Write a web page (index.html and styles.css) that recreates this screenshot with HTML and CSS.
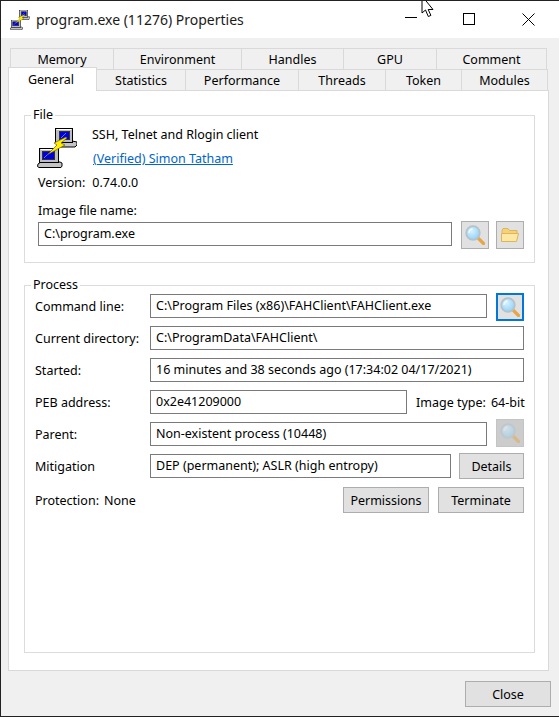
FILE: index.html
```html
<!DOCTYPE html>
<html lang="en">
<head>
<meta charset="utf-8">
<title>program.exe (11276) Properties</title>
<link rel="stylesheet" href="styles.css">
</head>
<body>
<svg width="0" height="0" class="defs">
  <defs>
    <radialGradient id="glass" cx=".4" cy=".35" r=".7">
      <stop offset="0" stop-color="#d8f2ff"/>
      <stop offset="1" stop-color="#8fd0f5"/>
    </radialGradient>
    <g id="putty">
      <path d="M22 13h13l5 1v3l-2 2H24z" fill="#c4c4c4" stroke="#000"/>
      <rect x="18.500" y=".5" width="17" height="14" fill="#bdbdbd" stroke="#000"/>
      <path d="M19.500 1.500h15" stroke="#fff"/>
      <rect x="22.500" y="3.500" width="10" height="8" fill="#0000e0" stroke="#333"/>
      <path d="M24 10l5-5" stroke="#4f7fff"/>
      <path d="M1 36l3-2h19l2 1v3l-1 1.500H2l-1.500-1z" fill="#c4c4c4" stroke="#000"/>
      <rect x="2.500" y="20.500" width="19" height="14" fill="#bdbdbd" stroke="#000"/>
      <path d="M3.500 21.500h17" stroke="#fff"/>
      <rect x="5.500" y="23.500" width="12" height="8" fill="#0000e0" stroke="#333"/>
      <path d="M7 30l5-5" stroke="#4f7fff"/>
      <path d="M29 9 17 15l3 2-10 10 18-10-4-2 6-5z" fill="#ffee00" stroke="#6b5c00" stroke-width=".7"/>
    </g>
    <g id="lens">
      <path d="M13.500 13.500 18.500 18.500" stroke="#e8a545" stroke-width="3.200" stroke-linecap="round"/>
      <circle cx="8" cy="8" r="6.800" fill="url(#glass)" stroke="#b4c2cc" stroke-width="1.700"/>
      <path d="M4 8a4.300 4.300 0 0 1 3.500-4" fill="none" stroke="#f2fbff" stroke-width="1.300"/>
    </g>
  </defs>
</svg>
<div class="window">
  <header class="titlebar">
    <svg class="appicon" viewBox="0 0 40 40" width="20" height="20"><use href="#putty"/></svg>
    <span class="wintitle">program.exe (11276) Properties</span>
    <div class="controls">
      <svg width="12" height="12" viewBox="0 0 12 12"><path d="M0 4.500h12" stroke="#000"/></svg>
      <svg width="12" height="12" viewBox="0 0 12 12"><rect x=".5" y=".5" width="11" height="11" fill="none" stroke="#000"/></svg>
      <svg class="closeicon" width="13" height="13" viewBox="0 0 13 13"><path d="M.5.500l12 12M12.500.500l-12 12" stroke="#000"/></svg>
    </div>
  </header>

  <main class="body">
    <nav class="tabs">
      <div class="tabrow back">
        <span class="tab">Memory</span>
        <span class="tab">Environment</span>
        <span class="tab">Handles</span>
        <span class="tab">GPU</span>
        <span class="tab">Comment</span>
      </div>
      <div class="tabrow front">
        <span class="tab active">General</span>
        <span class="tab">Statistics</span>
        <span class="tab">Performance</span>
        <span class="tab">Threads</span>
        <span class="tab">Token</span>
        <span class="tab">Modules</span>
      </div>
    </nav>

    <section class="panel">
      <fieldset class="group file">
        <legend>File</legend>
        <div class="fileinfo">
          <svg class="bigicon" viewBox="0 0 40 40" width="40" height="40"><use href="#putty"/></svg>
          <div class="filetext">
            <div>SSH, Telnet and Rlogin client</div>
            <a class="link" href="#">(Verified) Simon Tatham</a>
          </div>
        </div>
        <div class="version"><span>Version:</span><span>0.74.0.0</span></div>
        <div class="imagelabel">Image file name:</div>
        <div class="imagerow">
          <div class="field grow">C:\program.exe</div>
          <button class="iconbtn"><svg width="20" height="20" viewBox="0 0 20 20"><use href="#lens"/></svg></button>
          <button class="iconbtn">
            <svg width="20" height="18" viewBox="0 0 20 18"><path d="M2 4.500 3 2.500h5l1.500 2H17v3H2z" fill="#f4d27c" stroke="#e0b558"/><path d="M1.500 15.500V7.500h17l-2 8z" fill="#fde7a4" stroke="#e0b558"/></svg>
          </button>
        </div>
      </fieldset>

      <fieldset class="group process">
        <legend>Process</legend>
        <div class="row">
          <span class="label">Command line:</span>
          <div class="field grow">C:\Program Files (x86)\FAHClient\FAHClient.exe</div>
          <button class="iconbtn focus"><svg width="20" height="20" viewBox="0 0 20 20"><use href="#lens"/></svg></button>
        </div>
        <div class="row">
          <span class="label">Current directory:</span>
          <div class="field grow">C:\ProgramData\FAHClient\</div>
        </div>
        <div class="row">
          <span class="label">Started:</span>
          <div class="field grow">16 minutes and 38 seconds ago (17:34:02 04/17/2021)</div>
        </div>
        <div class="row">
          <span class="label">PEB address:</span>
          <div class="field grow">0x2e41209000</div>
          <span class="imagetype"><span>Image type:</span><span>64-bit</span></span>
        </div>
        <div class="row">
          <span class="label">Parent:</span>
          <div class="field grow">Non-existent process (10448)</div>
          <button class="iconbtn disabled"><svg width="20" height="20" viewBox="0 0 20 20"><use href="#lens"/></svg></button>
        </div>
        <div class="row">
          <span class="label">Mitigation</span>
          <div class="field grow">DEP (permanent); ASLR (high entropy)</div>
          <button class="btn details">Details</button>
        </div>
        <div class="row lastrow">
          <span class="protection"><span>Protection:</span><span>None</span></span>
          <button class="btn action">Permissions</button>
          <button class="btn action">Terminate</button>
        </div>
      </fieldset>
    </section>

    <footer class="footer"><button class="btn close">Close</button></footer>
  </main>

  <svg class="cursor" width="14" height="20" viewBox="0 0 14 20"><path d="M1-4v17l3.500-3 2.800 6.500 2.600-1.100L7.200 9.500H12z" fill="#fff" stroke="#000"/></svg>
</div>
</body>
</html>
```
FILE: styles.css
```css
* { box-sizing: border-box; }
html, body { margin: 0; padding: 0; }
body {
  width: 559px;
  height: 717px;
  overflow: hidden;
  font-family: "Noto Sans", "Open Sans", sans-serif;
  font-size: 12.5px;
  color: #000;
  background: #fff;
}
.defs { display: block; position: absolute; }
.window {
  position: relative;
  width: 559px;
  height: 717px;
  display: flex;
  flex-direction: column;
  border-top: 1px solid #222;
  border-left: 1px solid #222;
  border-bottom: 1px solid #222;
  overflow: hidden;
}
.titlebar {
  height: 37px;
  flex: none;
  display: flex;
  align-items: center;
  background: #fff;
  padding-left: 9px;
}
.appicon { flex: none; margin-right: 6px; }
.wintitle { font-size: 14px; color: #1a1a1a; }
.controls {
  margin-left: auto;
  margin-right: 24px;
  display: flex;
  align-items: center;
  gap: 46px;
  height: 100%;
}
.closeicon { margin-left: 1px; }
.controls svg { margin-top: -1px; }
.body {
  flex: 1;
  display: flex;
  flex-direction: column;
  background: #f0f0f0;
  padding: 10px 10px 0 7px;
}
.tabs { flex: none; height: 42px; }
.tabrow { display: grid; height: 21px; }
.back { margin-left: 2px; grid-template-columns: 104px 128px 102px 93px 110px; }
.front { grid-template-columns: 89px 89px 113px 87px 76px 86px; position: relative; z-index: 1; }
.tab {
  display: flex;
  align-items: center;
  justify-content: center;
  background: #f0f0f0;
  border: 1px solid #d9d9d9;
  border-left: 0;
  border-bottom: 0;
  height: 21px;
  padding-top: 1px;
}
.back .tab:first-child { border-left: 1px solid #d9d9d9; }
.front .tab { height: 22px; border-bottom: 1px solid #d9d9d9; }
.front .tab.active {
  background: #fff;
  height: 24px;
  margin-top: -2px;
  border: 1px solid #d9d9d9;
  border-bottom: 0;
  padding-top: 0;
  padding-right: 3px;
  position: relative;
  z-index: 2;
}
.panel {
  height: 581px;
  width: 541px;
  flex: none;
  background: #fff;
  border: 1px solid #d9d9d9;
  padding: 16px 14px 0 15px;
}
.group {
  margin: 0;
  width: 511px;
  border: 1px solid #dcdcdc;
  min-inline-size: 0;
}
.group legend { padding: 0 2px; line-height: 16px; }
.file { height: 156px; padding: 0 10px 0 13px; }
.file legend { margin-left: -7px; }
.process { height: 376px; margin-top: 14px; padding: 1px 10px 0 10px; }
.process legend { margin-left: -4px; }
.fileinfo { display: flex; height: 47px; }
.bigicon { flex: none; margin: 5px 15px 0 -1px; }
.filetext { display: flex; flex-direction: column; gap: 7px; padding-top: 3px; line-height: 17px; }
.link { color: #0066cc; text-decoration: underline; margin-left: 1px; }
.version { display: flex; gap: 7px; margin-top: 4px; line-height: 17px; }
.imagelabel { margin-top: 11px; line-height: 17px; }
.imagerow { display: flex; align-items: flex-start; margin-top: 2px; height: 28px; }
.imagerow .field { margin-top: 1px; }
.imagerow .iconbtn { margin-left: 7px; }
.imagerow .iconbtn:nth-child(2) { margin-left: 9px; }
.field {
  height: 24px;
  border: 1px solid #7a7a7a;
  background: #fff;
  padding: 0 5px;
  line-height: 22px;
  white-space: nowrap;
  overflow: hidden;
}
.grow { flex: 1; min-width: 0; }
.iconbtn {
  flex: none;
  width: 28px;
  height: 28px;
  padding: 0;
  border: 1px solid #adadad;
  background: #e1e1e1;
  display: flex;
  align-items: center;
  justify-content: center;
}
.iconbtn.focus { border: 2px solid #0078d7; margin: 2px 0 0 9px; }
.iconbtn.disabled { background: #cccccc; border-color: #c4c4c4; margin: 0 0 2px 9px; }
.iconbtn.disabled svg { opacity: .5; }
.row { display: flex; align-items: center; height: 24px; margin-bottom: 8px; }
.label { flex: none; width: 115px; }
.imagetype { flex: none; display: flex; gap: 5px; width: 117px; padding-left: 9px; white-space: nowrap; }
.btn {
  font: inherit;
  color: #000;
  height: 26px;
  padding: 0;
  background: #e1e1e1;
  border: 1px solid #adadad;
  flex: none;
}
.details { width: 65px; margin-left: 8px; }
.lastrow { margin-top: 9px; height: 26px; }
.protection { display: flex; gap: 5px; margin-right: auto; }
.action { width: 86px; margin-left: 9px; }
.footer { flex: 1; display: flex; justify-content: flex-end; }
.close { width: 86px; margin-top: 10px; margin-right: -2px; }
.cursor { position: absolute; left: 420px; top: -1px; }
```
